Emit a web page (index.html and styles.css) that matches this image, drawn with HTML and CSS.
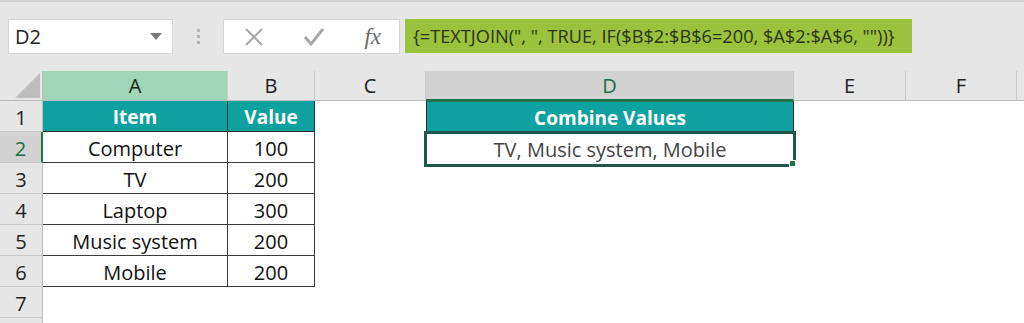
FILE: index.html
```html
<!DOCTYPE html>
<html lang="en">
<head>
  <meta charset="UTF-8">
  <title>TEXTJOIN</title>
  <link rel="stylesheet" href="styles.css">
</head>
<body>
  <div class="toolbar">
    <div class="namebox">
      <span>D2</span>
      <svg class="caret" width="12" height="7" viewBox="0 0 12 7"><path d="M0 0h12L6 7z" fill="#7a7a7a"/></svg>
    </div>
    <div class="grip"><i></i><i></i><i></i></div>
    <div class="fxbox">
      <svg width="20" height="20" viewBox="0 0 20 20"><path d="M2 2L18 18M18 2L2 18" stroke="#a8a8a8" stroke-width="2" fill="none"/></svg>
      <svg width="22" height="20" viewBox="0 0 22 20"><path d="M2 10l6 7L20 2" stroke="#a8a8a8" stroke-width="3" fill="none"/></svg>
      <span class="fx">fx</span>
    </div>
    <div class="formula">{=TEXTJOIN(", ", TRUE, IF($B$2:$B$6=200, $A$2:$A$6, ""))}</div>
  </div>

  <div class="sheet">
    <div class="corner"><svg width="25" height="25" viewBox="0 0 25 25"><path d="M25 0V25H0z" fill="#bdbdbd"/></svg></div>
    <div class="colhead col-a">A</div>
    <div class="colhead">B</div>
    <div class="colhead">C</div>
    <div class="colhead col-d">D</div>
    <div class="colhead">E</div>
    <div class="colhead">F</div>
    <div class="colhead last"></div>

    <div class="rowhead">1</div>
    <div class="cell th">Item</div>
    <div class="cell th">Value</div>
    <div class="cell"></div>
    <div class="cell th th-d">Combine Values</div>
    <div class="cell"></div><div class="cell"></div><div class="cell"></div>

    <div class="rowhead row-sel">2</div>
    <div class="cell td">Computer</div>
    <div class="cell td">100</div>
    <div class="cell"></div>
    <div class="cell active">TV, Music system, Mobile<span class="handle"></span></div>
    <div class="cell"></div><div class="cell"></div><div class="cell"></div>

    <div class="rowhead">3</div>
    <div class="cell td">TV</div>
    <div class="cell td">200</div>
    <div class="cell"></div><div class="cell"></div><div class="cell"></div><div class="cell"></div><div class="cell"></div>

    <div class="rowhead">4</div>
    <div class="cell td">Laptop</div>
    <div class="cell td">300</div>
    <div class="cell"></div><div class="cell"></div><div class="cell"></div><div class="cell"></div><div class="cell"></div>

    <div class="rowhead">5</div>
    <div class="cell td">Music system</div>
    <div class="cell td">200</div>
    <div class="cell"></div><div class="cell"></div><div class="cell"></div><div class="cell"></div><div class="cell"></div>

    <div class="rowhead">6</div>
    <div class="cell td">Mobile</div>
    <div class="cell td">200</div>
    <div class="cell"></div><div class="cell"></div><div class="cell"></div><div class="cell"></div><div class="cell"></div>

    <div class="rowhead">7</div>
    <div class="cell"></div><div class="cell"></div><div class="cell"></div><div class="cell"></div><div class="cell"></div><div class="cell"></div><div class="cell"></div>

    <div class="rowhead"></div>
  </div>
</body>
</html>
```

FILE: styles.css
```css
body {
  margin: 0;
  font-family: "Open Sans", "Noto Sans", sans-serif;
  background: white;
  overflow: hidden;
}
.toolbar {
  height: 71px;
  box-sizing: border-box;
  background: #e6e6e6;
  border-top: 2px solid #d0d0d0;
  display: flex;
  align-items: flex-start;
  padding: 17px 0 0 8px;
}
.namebox {
  width: 165px;
  height: 35px;
  box-sizing: border-box;
  background: white;
  border: 1px solid #d6d6d6;
  display: flex;
  align-items: center;
  justify-content: space-between;
  padding: 0 10px 0 6px;
  font-size: 20px;
  color: #222;
}
.grip {
  width: 50px;
  height: 35px;
  display: flex;
  flex-direction: column;
  align-items: center;
  justify-content: center;
  gap: 3px;
}
.grip i {
  width: 3px;
  height: 3px;
  background: #b4b4b4;
}
.fxbox {
  width: 177px;
  height: 35px;
  box-sizing: border-box;
  background: white;
  border: 1px solid #d6d6d6;
  display: flex;
  align-items: center;
  justify-content: space-between;
  padding: 0 18px 0 20px;
}
.fx {
  font-family: "Liberation Serif", serif;
  font-style: italic;
  font-size: 23px;
  color: #6a6a6a;
}
.formula {
  margin-left: 5px;
  width: 507px;
  height: 34px;
  background: #9bc23d;
  color: #2a3312;
  font-size: 18.2px;
  line-height: 34px;
  padding-left: 8px;
  box-sizing: border-box;
  white-space: nowrap;
}
.sheet {
  display: grid;
  grid-template-columns: 43px 185px 87px 111px 368px 112px 111px 1fr;
  grid-template-rows: 30px;
  grid-auto-rows: 31px;
}
.corner {
  background: #e6e6e6;
  border-bottom: 1px solid #bdbdbd;
  border-right: 1px solid #bdbdbd;
  display: flex;
  align-items: flex-end;
  justify-content: flex-end;
  padding: 0 2px 2px 0;
}
.colhead {
  background: #e6e6e6;
  border-right: 1px solid #cacaca;
  border-bottom: 1px solid #bdbdbd;
  box-sizing: border-box;
  text-align: center;
  font-size: 20px;
  line-height: 30px;
  color: #222;
}
.colhead.col-a {
  background: #9fd6b7;
}
.colhead.col-d {
  background: #d2d2d2;
  color: #1e6b47;
  border-bottom: 2px solid #217346;
}
.colhead.last {
  border-right: none;
}
.rowhead {
  background: #e6e6e6;
  border-bottom: 1px solid #cacaca;
  border-right: 1px solid #bdbdbd;
  box-sizing: border-box;
  text-align: center;
  font-size: 20px;
  line-height: 29px;
  padding-top: 2px;
  color: #222;
}
.rowhead.row-sel {
  background: #d2d2d2;
  color: #1e6b47;
  border-right: 2px solid #217346;
}
.cell {
  box-sizing: border-box;
  text-align: center;
  font-size: 20px;
  line-height: 29px;
  padding-top: 2px;
  white-space: nowrap;
  color: #111;
}
.th {
  background: #0fa19f;
  color: white;
  font-weight: bold;
  font-size: 19px;
  border-right: 1px solid #2b2b2b;
  border-bottom: 1px solid #2b2b2b;
}
.th-d {
  border-left: 1px solid #2b2b2b;
  border-top: 1px solid #217346;
}
.td {
  border-right: 1px solid #3a3a3a;
  border-bottom: 1px solid #3a3a3a;
}
.active {
  position: relative;
  margin: -1px -2px -4px -2px;
  border: 3px solid #1f574f;
  line-height: 30px;
  padding-top: 1px;
  color: #444;
  z-index: 1;
}
.handle {
  position: absolute;
  right: -3px;
  bottom: -3px;
  width: 5px;
  height: 5px;
  background: #217346;
  border: 1px solid white;
}
```
